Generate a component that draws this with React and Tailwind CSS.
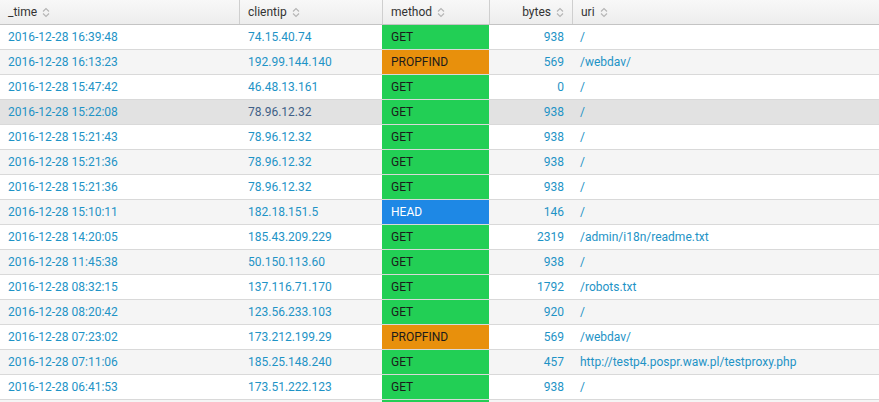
import React from "react";

const ROWS = [
  ["2016-12-28 16:39:48", "74.15.40.74", "GET", 938, "/"],
  ["2016-12-28 16:13:23", "192.99.144.140", "PROPFIND", 569, "/webdav/"],
  ["2016-12-28 15:47:42", "46.48.13.161", "GET", 0, "/"],
  ["2016-12-28 15:22:08", "78.96.12.32", "GET", 938, "/"],
  ["2016-12-28 15:21:43", "78.96.12.32", "GET", 938, "/"],
  ["2016-12-28 15:21:36", "78.96.12.32", "GET", 938, "/"],
  ["2016-12-28 15:21:36", "78.96.12.32", "GET", 938, "/"],
  ["2016-12-28 15:10:11", "182.18.151.5", "HEAD", 146, "/"],
  ["2016-12-28 14:20:05", "185.43.209.229", "GET", 2319, "/admin/i18n/readme.txt"],
  ["2016-12-28 11:45:38", "50.150.113.60", "GET", 938, "/"],
  ["2016-12-28 08:32:15", "137.116.71.170", "GET", 1792, "/robots.txt"],
  ["2016-12-28 08:20:42", "123.56.233.103", "GET", 920, "/"],
  ["2016-12-28 07:23:02", "173.212.199.29", "PROPFIND", 569, "/webdav/"],
  ["2016-12-28 07:11:06", "185.25.148.240", "GET", 457, "http://testp4.pospr.waw.pl/testproxy.php"],
  ["2016-12-28 06:41:53", "173.51.222.123", "GET", 938, "/"],
];

const METHOD_BG = {
  GET: "bg-[#22cf55] text-[#1b1b1b]",
  PROPFIND: "bg-[#e8900c] text-[#1b1b1b]",
  HEAD: "bg-[#1e88e5] text-white",
};

const COLS = "grid grid-cols-[239px_143px_107px_83px_1fr]";

const SortIcon = () => (
  <svg width="8" height="11" viewBox="0 0 8 11" className="ml-[5px] text-[#b5b5b5]">
    <path d="M1 4.5 L4 1.5 L7 4.5" fill="none" stroke="currentColor" strokeWidth="1.1" />
    <path d="M1 6.5 L4 9.5 L7 6.5" fill="none" stroke="currentColor" strokeWidth="1.1" />
  </svg>
);

const HeaderCell = ({ label, right, first }) => (
  <div
    className={`flex items-center h-6 ${first ? "pl-2" : "border-l border-[#cfcfcf] pl-2"} ${
      right ? "justify-end pr-2" : ""
    }`}
  >
    <span>{label}</span>
    <SortIcon />
  </div>
);

export default function App() {
  return (
    <div
      className="w-[879px] h-[402px] overflow-hidden bg-white text-[12px] text-[#333]"
      style={{ fontFamily: "Roboto, 'Liberation Sans', sans-serif" }}
    >
      {/* HEADER */}
      <div className={`${COLS} bg-gradient-to-b from-[#f8f8f8] to-[#ededed] border-b border-[#c4c4c4]`}>
        <HeaderCell label="_time" first />
        <HeaderCell label="clientip" />
        <HeaderCell label="method" />
        <HeaderCell label="bytes" right />
        <HeaderCell label="uri" />
      </div>

      {/* ROWS */}
      {ROWS.map(([time, ip, method, bytes, uri], i) => {
        const hover = i === 3;
        const bg = hover ? "bg-[#e2e2e2]" : i % 2 === 1 ? "bg-[#f5f5f5]" : "bg-white";
        return (
          <div key={i} className={`${COLS} ${bg} border-b border-[#d9d9d9] h-[25px]`}>
            <div className="flex items-center pl-2 text-[#1e93c6]">{time}</div>
            <div className={`flex items-center pl-[9px] ${hover ? "text-[#3f5f86]" : "text-[#1e93c6]"}`}>
              {ip}
            </div>
            <div className={`flex items-center pl-[9px] ${METHOD_BG[method]}`}>{method}</div>
            <div className="flex items-center justify-end pr-2 text-[#1e93c6]">{bytes}</div>
            <div className="flex items-center pl-2 text-[#1e93c6] whitespace-nowrap">{uri}</div>
          </div>
        );
      })}

      {/* next row, scrolled below the fold */}
      <div className={`${COLS} bg-[#f5f5f5] h-[25px]`}>
        <div />
        <div />
        <div className="bg-[#22cf55]" />
        <div />
        <div />
      </div>
    </div>
  );
}
